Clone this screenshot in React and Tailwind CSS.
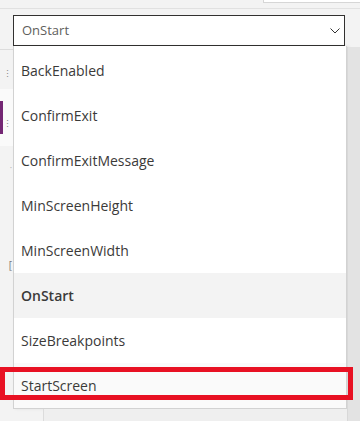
import React from "react";

const items = [
  "BackEnabled",
  "ConfirmExit",
  "ConfirmExitMessage",
  "MinScreenHeight",
  "MinScreenWidth",
  "OnStart",
  "SizeBreakpoints",
  "StartScreen",
];

const selected = "OnStart";
const hovered = "StartScreen";

function Chevron() {
  return (
    <svg width="10" height="6" viewBox="0 0 10 6" fill="none">
      <path d="M0.5 0.5 L5 5 L9.5 0.5" stroke="#333" strokeWidth="1" />
    </svg>
  );
}

export default function App() {
  return (
    <div
      className="relative w-[360px] h-[421px] overflow-hidden bg-[#f3f3f3] text-[#3b3a39]"
      style={{ fontFamily: '"Open Sans", "Noto Sans", sans-serif' }}
    >
      {/* barra superior */}
      <div className="flex h-[9px] border-b border-[#e1e1e1]">
        <div className="flex-1" />
        <div className="w-[97px] h-[3px] border-l border-b border-[#d6d6d6] bg-white" />
      </div>

      <div className="flex h-[412px]">
        {/* restos del panel izquierdo */}
        <div className="w-[13px] flex flex-col">
          <div className="h-[41px] border-b border-[#dcdcdc]" />
          <div className="relative h-[39px]">
            <span className="absolute right-[1px] top-[19px] text-[9px] leading-none text-[#888]">⋮</span>
          </div>
          <div className="relative h-[57px] bg-[#fafafa]">
            <div className="absolute left-0 top-[12px] w-[3px] h-[33px] bg-[#742774]" />
            <span className="absolute right-[1px] top-[30px] text-[9px] leading-none text-[#888]">⋮</span>
          </div>
          <div className="relative h-[60px]">
            <span className="absolute right-[1px] top-[17px] text-[9px] leading-none text-[#aaa]">·</span>
          </div>
          <div className="relative h-[60px]">
            <span className="absolute right-[1px] top-[54px] text-[10px] leading-none text-[#777]">[</span>
          </div>
        </div>

        {/* selector */}
        <div className="w-[334px] flex flex-col">
          <div className="mt-[6px] w-[332px] h-[31px] border border-[#323130] bg-white flex items-center justify-between pl-[8px] pr-[4px]">
            <span className="text-[13px] text-[#605e5c]">OnStart</span>
            <Chevron />
          </div>
          <div className="border-x border-b border-[#d2d2d2] bg-white pt-[2px] shadow-[2px_0_3px_rgba(0,0,0,0.08)]">
            {items.map((it) => (
              <div
                key={it}
                className={
                  "h-[45px] flex items-center pl-[7px] text-[14px] " +
                  (it === selected
                    ? "bg-[#f3f3f3] font-semibold"
                    : it === hovered
                    ? "bg-[#fafafa]"
                    : "")
                }
              >
                {it}
              </div>
            ))}
          </div>
          <div className="flex-1 flex">
            <div className="w-[31px] border-r border-[#dcdcdc]" />
            <div className="flex-1 bg-[#efefef]" />
          </div>
        </div>

        <div className="w-[13px] mt-[38px] bg-[#e3e3e3] border-l border-[#d8d8d8]" />
      </div>

      {/* marco rojo de resaltado */}
      <div className="absolute left-0 top-[367px] w-[353px] h-[33px] border-[5px] border-[#e81123]" />
    </div>
  );
}
